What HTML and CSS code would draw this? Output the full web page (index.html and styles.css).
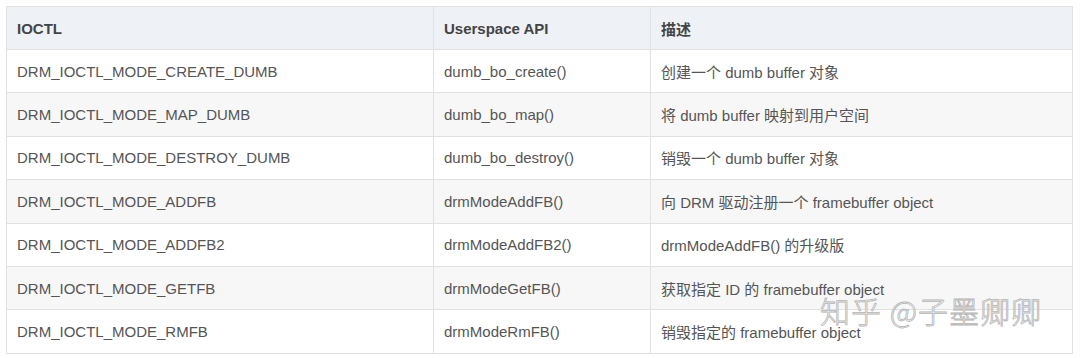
FILE: index.html
```html
<!DOCTYPE html>
<html lang="zh-CN">
<head>
  <meta charset="UTF-8">
  <title>DRM IOCTL</title>
  <link rel="stylesheet" href="styles.css">
</head>
<body>
  <div class="wrap">
    <table class="ioctl-table">
      <thead>
        <tr>
          <th class="col-ioctl">IOCTL</th>
          <th class="col-api">Userspace API</th>
          <th>描述</th>
        </tr>
      </thead>
      <tbody>
        <tr>
          <td>DRM_IOCTL_MODE_CREATE_DUMB</td>
          <td>dumb_bo_create()</td>
          <td>创建一个 dumb buffer 对象</td>
        </tr>
        <tr>
          <td>DRM_IOCTL_MODE_MAP_DUMB</td>
          <td>dumb_bo_map()</td>
          <td>将 dumb buffer 映射到用户空间</td>
        </tr>
        <tr>
          <td>DRM_IOCTL_MODE_DESTROY_DUMB</td>
          <td>dumb_bo_destroy()</td>
          <td>销毁一个 dumb buffer 对象</td>
        </tr>
        <tr>
          <td>DRM_IOCTL_MODE_ADDFB</td>
          <td>drmModeAddFB()</td>
          <td>向 DRM 驱动注册一个 framebuffer object</td>
        </tr>
        <tr>
          <td>DRM_IOCTL_MODE_ADDFB2</td>
          <td>drmModeAddFB2()</td>
          <td>drmModeAddFB() 的升级版</td>
        </tr>
        <tr>
          <td>DRM_IOCTL_MODE_GETFB</td>
          <td>drmModeGetFB()</td>
          <td>获取指定 ID 的 framebuffer object</td>
        </tr>
        <tr>
          <td>DRM_IOCTL_MODE_RMFB</td>
          <td>drmModeRmFB()</td>
          <td>销毁指定的 framebuffer object</td>
        </tr>
      </tbody>
    </table>
    <div class="watermark">知乎 @子墨卿卿</div>
  </div>
</body>
</html>
```

FILE: styles.css
```css
* {
  box-sizing: border-box;
  margin: 0;
  padding: 0;
}

body {
  background-color: #fff;
  color: #555;
  font-family: 'Liberation Sans', Arial, 'Noto Sans CJK SC', sans-serif;
  font-size: 15px;
}

.wrap {
  position: relative;
  padding: 6px 7px 0 6px;
}

.ioctl-table {
  width: 100%;
  border-collapse: collapse;
  border: 1px solid #e1e1e1;
}

.ioctl-table th,
.ioctl-table td {
  height: 43.4px;
  padding: 0 10px;
  text-align: left;
  vertical-align: middle;
  border: 1px solid #e1e1e1;
  white-space: nowrap;
}

.ioctl-table th {
  background-color: #eef1f5;
  color: #444;
  font-weight: bold;
  height: 43px;
}

.col-ioctl {
  width: 427px;
}

.col-api {
  width: 217px;
}

.ioctl-table tbody tr:nth-child(even) td {
  background-color: #f7f7f7;
}

.watermark {
  position: absolute;
  left: 820px;
  top: 290px;
  font-family: 'Noto Sans CJK SC', sans-serif;
  font-weight: 300;
  font-size: 30px;
  line-height: 40px;
  color: #fff;
  -webkit-text-stroke: 0.8px #b4b4b4;
  letter-spacing: 1px;
}
```
